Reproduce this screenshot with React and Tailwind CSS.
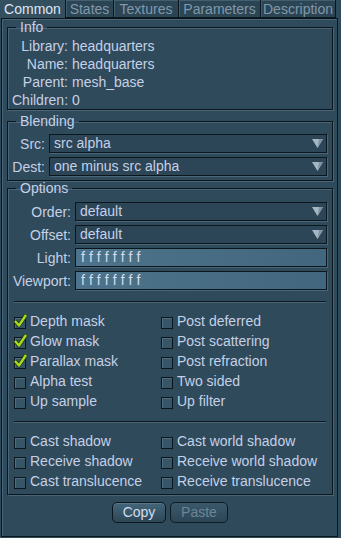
import React from 'react';

// Material editor panel — "Common" tab

const tabs = [
  { label: 'Common', w: 'w-[66px]', active: true },
  { label: 'States', w: 'w-[48px]' },
  { label: 'Textures', w: 'w-[65px]' },
  { label: 'Parameters', w: 'w-[82px]' },
  { label: 'Description', w: 'w-[75px]' },
];

const flagsA = [
  ['Depth mask', true, 'Post deferred', false],
  ['Glow mask', true, 'Post scattering', false],
  ['Parallax mask', true, 'Post refraction', false],
  ['Alpha test', false, 'Two sided', false],
  ['Up sample', false, 'Up filter', false],
];

const flagsB = [
  ['Cast shadow', 'Cast world shadow'],
  ['Receive shadow', 'Receive world shadow'],
  ['Cast translucence', 'Receive translucence'],
];

function Group({ title, className = '', children }) {
  return (
    <fieldset
      className={`ml-[5px] mr-[4px] border border-[#0b161d] shadow-[1px_1px_0_#4a6577,inset_1px_1px_0_#4a6577] ${className}`}
    >
      <legend className="ml-[8px] px-[4px] text-[14px] leading-[14px]">{title}</legend>
      {children}
    </fieldset>
  );
}

function Arrow() {
  return (
    <svg width="11" height="9" viewBox="0 0 11 9" className="shrink-0">
      <polygon points="0,0 11,0 5.5,9" fill="#a6b7c3" />
      <polygon points="7,0 11,0 5.5,9" fill="#7f95a4" />
    </svg>
  );
}

function Select({ value }) {
  return (
    <div className="flex flex-1 h-[19px] items-center justify-between pl-[4px] pr-[3px] border border-[#0b161d] bg-[#2c4658] shadow-[1px_1px_0_#4a6577]">
      <span className="leading-[17px]">{value}</span>
      <Arrow />
    </div>
  );
}

function Field({ value }) {
  return (
    <div className="flex flex-1 h-[19px] items-center pl-[5px] border border-[#0b161d] bg-gradient-to-r from-[#4d748c] to-[#42667d] shadow-[1px_1px_0_#4a6577]">
      <span className="leading-[17px] tracking-[4.3px] text-[#d4dcee]">{value}</span>
    </div>
  );
}

function Check({ checked, label }) {
  return (
    <div className="flex h-[20px] items-center gap-[4px]">
      <span className="relative mt-[3px] w-[12px] h-[12px] shrink-0 border border-[#0b161d] bg-[#365668] shadow-[inset_1px_1px_0_#4f6e80]">
        {checked && (
          <svg width="15" height="15" viewBox="0 0 15 15" className="absolute left-[-2px] top-[-5px]">
            <path d="M2 8 L6 12.5 L13 2" fill="none" stroke="#1f3412" strokeWidth="4" strokeLinejoin="round" />
            <path d="M2 8 L6 12.5 L13 2" fill="none" stroke="#a8dd1c" strokeWidth="2.4" strokeLinejoin="round" />
          </svg>
        )}
      </span>
      <span className="leading-[16px]">{label}</span>
    </div>
  );
}

function Separator() {
  return <div className="mx-[6px] border-t border-b border-t-[#0b161d] border-b-[#4a6577]" />;
}

export default function App() {
  return (
    <div className="w-[341px] h-[538px] overflow-hidden bg-[#2e4a5b] text-[#c6d0e6] text-[14px] leading-[16px] font-['Liberation_Sans',Arial,sans-serif]">
      {/* tab strip */}
      <div className="flex h-[18px]">
        {tabs.map((t) => (
          <div
            key={t.label}
            className={`${t.w} h-[18px] flex items-center justify-center overflow-hidden whitespace-nowrap border-r border-[#0b161d] leading-[18px] ${
              t.active
                ? 'bg-[#34505f] text-[#dfe6f4]'
                : 'bg-[#2b4555] text-[#8198aa] border-b shadow-[inset_1px_1px_0_#435e6e]'
            }`}
          >
            {t.label}
          </div>
        ))}
      </div>

      {/* panel */}
      <div className="ml-[1px] w-[337px] h-[519px] border border-[#0b161d] shadow-[inset_1px_1px_0_#4a6577]">
        <Group title="Info" className="mt-[1px]">
          <div className="pl-[4px] pt-[3px]">
            {[
              ['Library:', 'headquarters'],
              ['Name:', 'headquarters'],
              ['Parent:', 'mesh_base'],
              ['Children:', '0'],
            ].map(([k, v]) => (
              <div key={k} className="flex h-[18px] items-center gap-[4px]">
                <span className="w-[56px] text-right">{k}</span>
                <span>{v}</span>
              </div>
            ))}
          </div>
        </Group>

        <Group title="Blending" className="mt-[4px]">
          <div className="flex flex-col gap-[4px] pl-[4px] pr-[5px] pt-[6px] pb-[4px]">
            <div className="flex items-center gap-[4px]">
              <span className="w-[33px] text-right">Src:</span>
              <Select value="src alpha" />
            </div>
            <div className="flex items-center gap-[4px]">
              <span className="w-[33px] text-right">Dest:</span>
              <Select value="one minus src alpha" />
            </div>
          </div>
        </Group>

        <Group title="Options">
          <div className="flex flex-col gap-[4px] pl-[4px] pr-[5px] pt-[7px]">
            <div className="flex items-center gap-[4px]">
              <span className="w-[59px] text-right">Order:</span>
              <Select value="default" />
            </div>
            <div className="flex items-center gap-[4px]">
              <span className="w-[59px] text-right">Offset:</span>
              <Select value="default" />
            </div>
            <div className="flex items-center gap-[4px]">
              <span className="w-[59px] text-right">Light:</span>
              <Field value="ffffffff" />
            </div>
            <div className="flex items-center gap-[4px]">
              <span className="w-[59px] text-right">Viewport:</span>
              <Field value="ffffffff" />
            </div>
          </div>

          <div className="mt-[11px]">
            <Separator />
          </div>
          <div className="grid grid-cols-[147px_1fr] pl-[6px] mt-[8px]">
            {flagsA.map(([a, ac, b, bc]) => (
              <React.Fragment key={a}>
                <Check label={a} checked={ac} />
                <Check label={b} checked={bc} />
              </React.Fragment>
            ))}
          </div>

          <div className="mt-[10px]">
            <Separator />
          </div>
          <div className="grid grid-cols-[147px_1fr] pl-[6px] mt-[8px] pb-[3px]">
            {flagsB.map(([a, b]) => (
              <React.Fragment key={a}>
                <Check label={a} />
                <Check label={b} />
              </React.Fragment>
            ))}
          </div>
        </Group>

        <div className="flex justify-center gap-[4px] mt-[7px] pl-[1px]">
          <button className="w-[54px] h-[21px] rounded-[5px] border border-[#0b161d] bg-gradient-to-b from-[#44667a] to-[#2c4757] text-[#d2dbee] leading-[19px] shadow-[inset_0_1px_0_#56788c]">
            Copy
          </button>
          <button className="w-[58px] h-[21px] rounded-[5px] border border-[#0f1c24] bg-gradient-to-b from-[#3a586a] to-[#2c4656] text-[#6c8596] leading-[19px]">
            Paste
          </button>
        </div>
      </div>
    </div>
  );
}
